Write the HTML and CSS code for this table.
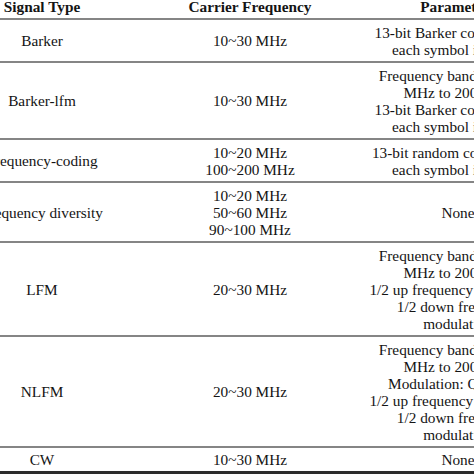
FILE: index.html
```html
<!DOCTYPE html>
<html>
<head>
<meta charset="utf-8">
<link rel="stylesheet" href="styles.css">
</head>
<body>
<div class="frame">
<table class="sig">
<thead>
<tr><th>Signal Type</th><th>Carrier Frequency</th><th>Parameters</th></tr>
</thead>
<tbody>
<tr><td>Barker</td><td>10~30 MHz</td><td>13-bit Barker code, and the<br>each symbol is 0.1 μs</td></tr>
<tr><td>Barker-lfm</td><td>10~30 MHz</td><td>Frequency band from 100<br>MHz to 200 MHz<br>13-bit Barker code, and the<br>each symbol is 0.1 μs</td></tr>
<tr><td>Frequency-coding</td><td>10~20 MHz<br>100~200 MHz</td><td>13-bit random code, and the<br>each symbol is 0.1 μs</td></tr>
<tr><td>Frequency diversity</td><td>10~20 MHz<br>50~60 MHz<br>90~100 MHz</td><td>None</td></tr>
<tr><td>LFM</td><td>20~30 MHz</td><td>Frequency band from 100<br>MHz to 200 MHz<br>1/2 up frequency modulation<br>1/2 down frequency<br>modulation</td></tr>
<tr><td>NLFM</td><td>20~30 MHz</td><td>Frequency band from 100<br>MHz to 200 MHz<br>Modulation: Quadratic<br>1/2 up frequency modulation<br>1/2 down frequency<br>modulation</td></tr>
<tr class="last"><td>CW</td><td>10~30 MHz</td><td>None</td></tr>
</tbody>
</table>
</div>
</body>
</html>
```
FILE: styles.css
```css
html, body {
  margin: 0;
  padding: 0;
  background: #fff;
}
.frame {
  width: 474px;
  height: 474px;
  overflow: hidden;
  position: relative;
}
.sig {
  border-collapse: collapse;
  table-layout: fixed;
  width: 624px;
  margin-left: -62px;
  margin-top: -9px;
  font-family: "Liberation Serif", "Times New Roman", serif;
  font-size: 15.3px;
  line-height: 17px;
  color: #141414;
}
.sig th, .sig td {
  width: 208px;
  text-align: center;
  vertical-align: middle;
  white-space: nowrap;
  padding: 3.5px 0;
  border-bottom: 2px solid #858585;
}
.sig th {
  font-weight: bold;
  padding: 5px 0 3px;
  border-top: 2px solid #333;
}
.sig tr.last td {
  padding: 2.5px 0 3px;
  border-bottom: 6px solid #2c2c2c;
}
```
